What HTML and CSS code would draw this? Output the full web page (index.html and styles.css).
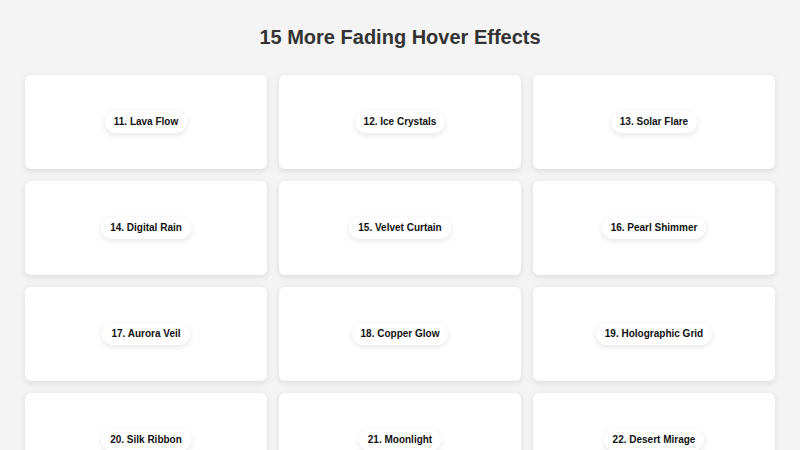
FILE: index.html
```html
<!DOCTYPE html>
<html lang="en">
<head>
  <meta charset="UTF-8" />
  <meta name="viewport" content="width=device-width, initial-scale=1.0"/>
  <title>15 More Fading Hover Effects</title>
  <link rel="stylesheet" href="styles.css">
</head>
<body>

<h1>15 More Fading Hover Effects</h1>

<div class="grid">
  <div class="card"><span class="label">11. Lava Flow</span></div>
  <div class="card"><span class="label">12. Ice Crystals</span></div>
  <div class="card"><span class="label">13. Solar Flare</span></div>
  <div class="card"><span class="label">14. Digital Rain</span></div>
  <div class="card"><span class="label">15. Velvet Curtain</span></div>
  <div class="card"><span class="label">16. Pearl Shimmer</span></div>
  <div class="card"><span class="label">17. Aurora Veil</span></div>
  <div class="card"><span class="label">18. Copper Glow</span></div>
  <div class="card"><span class="label">19. Holographic Grid</span></div>
  <div class="card"><span class="label">20. Silk Ribbon</span></div>
  <div class="card"><span class="label">21. Moonlight</span></div>
  <div class="card"><span class="label">22. Desert Mirage</span></div>
</div>

</body>
</html>
```

FILE: styles.css
```css
body {
  margin: 0;
  padding: 25px;
  font-family: 'Liberation Sans', Arial, sans-serif;
  background: #f4f4f4;
  color: #333;
}

h1 {
  text-align: center;
  font-size: 20px;
  margin: 0 0 25px;
  line-height: 25px;
}

.grid {
  display: grid;
  grid-template-columns: repeat(3, 1fr);
  gap: 12px;
}

.card {
  background: white;
  height: 94px;
  border-radius: 6px;
  box-shadow: 0 2px 6px rgba(0, 0, 0, 0.1);
  display: flex;
  justify-content: center;
  align-items: center;
  transition: opacity 0.4s ease;
}

.card:hover {
  opacity: 0.8;
}

.label {
  background: white;
  color: #111;
  font-size: 10px;
  font-weight: bold;
  line-height: 12px;
  padding: 5px 9px;
  border-radius: 11px;
  box-shadow: 0 2px 6px rgba(0, 0, 0, 0.1);
}
```
